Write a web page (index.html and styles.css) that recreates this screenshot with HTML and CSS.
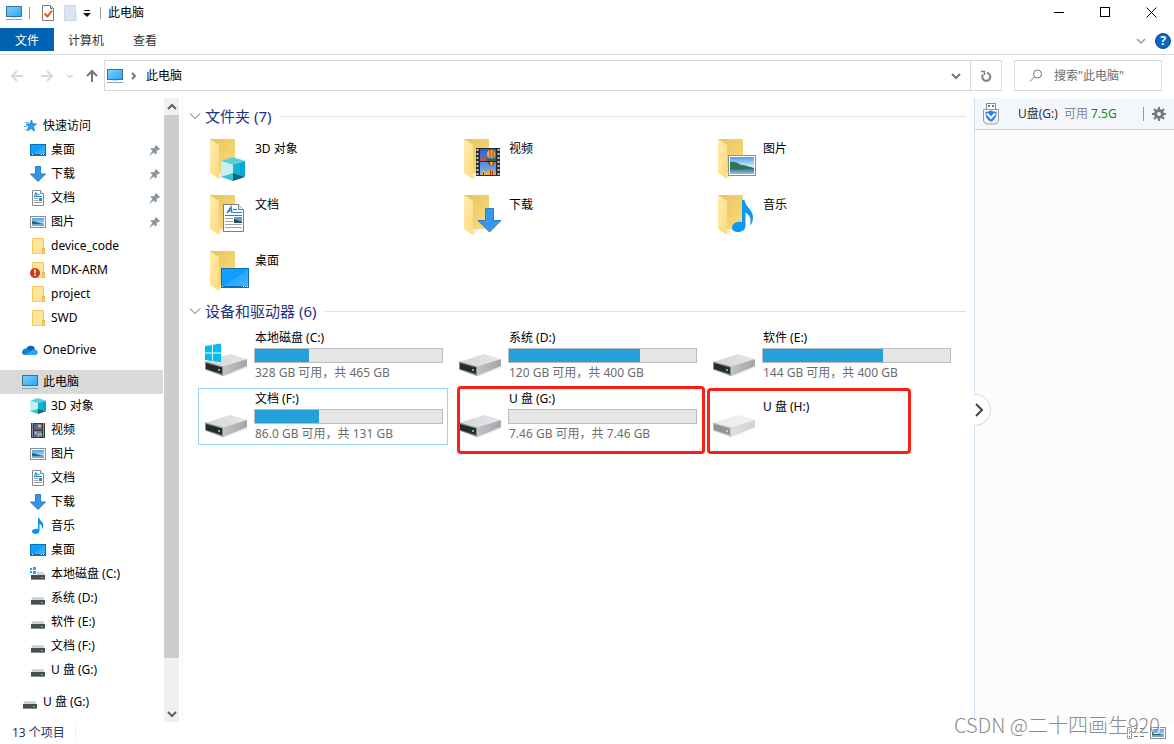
FILE: index.html
```html
<!DOCTYPE html>
<html lang="zh-CN">
<head>
  <meta charset="UTF-8" />
  <meta name="viewport" content="width=device-width, initial-scale=1.0" />
  <title>此电脑</title>
  <link rel="stylesheet" href="styles.css">
</head>
<body>
  <!-- icon sprite -->
  <svg class="sprite" aria-hidden="true">
    <defs>
      <linearGradient id="g-screen" x1="0" y1="0" x2="1" y2="1">
        <stop offset="0" stop-color="#7fd0ff" /><stop offset="1" stop-color="#28a5f5" />
      </linearGradient>
      <linearGradient id="g-desk" x1="0" y1="0" x2="1" y2="1">
        <stop offset="0" stop-color="#1ba1ff" /><stop offset="0.5" stop-color="#0d9dff" /><stop offset="0.51" stop-color="#2aa8ff" /><stop offset="1" stop-color="#45b3ff" />
      </linearGradient>
      <linearGradient id="g-back" x1="0" y1="0" x2="1" y2="1">
        <stop offset="0" stop-color="#e8c35a" /><stop offset="1" stop-color="#fbdc82" />
      </linearGradient>
      <linearGradient id="g-front" x1="0" y1="0" x2="1" y2="1">
        <stop offset="0" stop-color="#ffecb0" /><stop offset="1" stop-color="#fddb7c" />
      </linearGradient>
      <linearGradient id="g-side" x1="0" y1="0" x2="1" y2="0">
        <stop offset="0" stop-color="#c2c3c5" /><stop offset="1" stop-color="#a4a5a8" />
      </linearGradient>
      <linearGradient id="g-top" x1="0" y1="0" x2="1" y2="0">
        <stop offset="0" stop-color="#d4d5d7" /><stop offset="1" stop-color="#e6e7ea" />
      </linearGradient>
      <linearGradient id="g-sky" x1="0" y1="0" x2="0" y2="1">
        <stop offset="0" stop-color="#4f9fee" /><stop offset="1" stop-color="#e4f4fb" />
      </linearGradient>
      <linearGradient id="g-sea" x1="0" y1="0" x2="0" y2="1">
        <stop offset="0" stop-color="#2f6a86" /><stop offset="1" stop-color="#8fc0e0" />
      </linearGradient>
      <linearGradient id="g-film" x1="0" y1="0" x2="0" y2="1">
        <stop offset="0" stop-color="#2b62c4" /><stop offset="1" stop-color="#7db2ee" />
      </linearGradient>
    </defs>

    <symbol id="pc" viewBox="0 0 16 16">
      <rect x="0.5" y="1.5" width="15" height="10" fill="url(#g-screen)" stroke="#3a7396" />
      <rect x="5" y="12" width="6" height="1" fill="#c4dcea" />
      <rect x="0" y="14" width="16" height="1" fill="#8ba0b4" />
    </symbol>
    <symbol id="star" viewBox="0 0 16 16">
      <path d="M9.500 2l1.200 3.800 3.800.2-3 2.500 1 4.500-3.500-2.500L5.500 13l1-4.500L4 6.200l4-.4z" fill="#2b9df0" stroke="#1b7fd0" stroke-width=".8" />
      <path d="M3.500 4.500h3M2 8.500h3M3 11.500h2" stroke="#4fb3f5" fill="none" />
    </symbol>
    <symbol id="desktop" viewBox="0 0 16 16">
      <rect x="0.5" y="2.500" width="15" height="11" fill="url(#g-desk)" stroke="#0b6fb5" />
      <path d="M1 12.500h14" stroke="#0b6fb5" /><path d="M2 12.500h1M11 12.500h1M13 12.500h1" stroke="#fff" />
    </symbol>
    <symbol id="download" viewBox="0 0 16 16">
      <path d="M5.500 .5h5v7.500h5L8 15.500.500 8h5z" fill="#3393e4" stroke="#2a7cc4" />
    </symbol>
    <symbol id="document" viewBox="0 0 16 16">
      <path d="M2.500.500h8l3 3v12h-11z" fill="#fff" stroke="#8a8a8a" />
      <path d="M10.500.500v3h3" fill="#eee" stroke="#8a8a8a" />
      <path d="M4 6.500h8M7.500 4.500h2" stroke="#1b87d6" /><path d="M4.500 6l1.500-3.500L7 6" stroke="#1b87d6" fill="none" />
      <path d="M4 8.500h4M4 10.500h4M4 12.500h8" stroke="#9c9c9c" /><rect x="9" y="8" width="3" height="3" fill="#3c86b4" />
    </symbol>
    <symbol id="picture" viewBox="0 0 16 16">
      <rect x="0.5" y="2.500" width="15" height="11" fill="#fff" stroke="#8d8d8d" />
      <rect x="2" y="4" width="12" height="8" fill="url(#g-sky)" />
      <path d="M2 7c4 .5 7 2 12 3H2z" fill="#2f6a5c" /><path d="M2 10h12v2H2z" fill="#6ea6cc" />
    </symbol>
    <symbol id="music" viewBox="0 0 16 16">
      <path d="M8 0h1.300c.4 3 4.700 4 4 8.500-.2 1.500-1 2.300-1.500 2.500.8-2.500-.3-4.300-2.300-5v7c0 2-2 3-4 3-2.200 0-3.500-1-3.500-2.500C2 11.500 5 10.500 8 11z" fill="#0a94f0" />
    </symbol>
    <symbol id="video" viewBox="0 0 16 16">
      <rect x="1" y="1" width="14" height="15" fill="#3a3a3c" />
      <rect x="4" y="2" width="8" height="6" fill="#3566c0" /><rect x="4" y="9" width="8" height="6" fill="#4d8de0" />
      <path d="M2.500 1.500v14M13.500 1.500v14" stroke="#e4e4e4" stroke-dasharray="1 1" />
      <circle cx="9.500" cy="4" r="1.800" fill="#efb722" /><circle cx="6" cy="6" r="1.200" fill="#d8442c" />
      <path d="M5 10l2 2M8 14l2-2 2 1" stroke="#f0c22a" stroke-width="1.500" /><path d="M4 14h3" stroke="#b32b20" />
    </symbol>
    <symbol id="cube" viewBox="0 0 24 24">
      <path d="M12 0l12 4-12 4L0 4z" fill="#5dcfdc" /><path d="M0 4l12 4v8L0 20z" fill="#c8eff2" />
      <path d="M12 8l12-4v16l-12-4z" fill="#06a6da" /><path d="M12 8l7-2v12l-7-2z" fill="#12b5cf" />
      <path d="M0 20l12-4v8z" fill="#32c5d2" /><path d="M12 16l12 4-12 4z" fill="#04667f" />
    </symbol>
    <symbol id="folder" viewBox="0 0 16 16">
      <path d="M2.500.500h11v9h1v6h-12z" fill="#ffe69a" stroke="#eccb62" /><path d="M12.500 15.500v-5h2v5z" fill="#fbd970" stroke="#e0b94a" />
    </symbol>
    <symbol id="folder-alert" viewBox="0 0 16 16">
      <use href="#folder" width="16" height="16" />
      <circle cx="5" cy="11" r="5" fill="#cb3a20" /><path d="M5 7.500v4M5 12.500v1.500" stroke="#fff" stroke-width="1.500" />
    </symbol>
    <symbol id="onedrive" viewBox="0 0 16 16">
      <path d="M4 7a5 5 0 0 1 8.500-1.500L13 9 5 11z" fill="#0864b8" />
      <path d="M0 10.500C0 8 2 6.500 4 6.500c2 0 3 .8 4.500 2L6 13H3c-2 0-3-1-3-2.500z" fill="#1480d6" />
      <path d="M3.500 13l6-4.500c1-2 5.500-1.500 6 1 .8 1.500 0 3.500-2 3.500z" fill="#2ba5ee" />
    </symbol>
    <symbol id="drive" viewBox="0 0 16 16">
      <path d="M3 7h10l2 3H1z" fill="#d0d2d4" /><rect x="1" y="10" width="14" height="5" fill="#4b4d4f" />
      <path d="M1 14.500h14" stroke="#8b8d8f" /><rect x="11" y="12" width="2" height="1" fill="#3fe04a" />
    </symbol>
    <symbol id="drive-os" viewBox="0 0 16 16">
      <path d="M5 6h8l2 3H5z" fill="#d0d2d4" /><path d="M1 9h14v5H1z" fill="#4b4d4f" /><path d="M1 13.500h14" stroke="#8b8d8f" />
      <rect x="11" y="11" width="2" height="1" fill="#3fe04a" /><path d="M0 1h7v8H0z" fill="#fff" />
      <path d="M0 2h2v2H0zM3 1h3v3H3zM0 5h2v2H0zM3 5h3v3H3z" fill="#00b5f1" />
    </symbol>
    <symbol id="pin" viewBox="0 0 12 12">
      <path d="M7 1l4 4-1 1-1-.2-1.500 1.500.3 2.200-1 1-2-2L1 11.500.5 11 3.500 7l-2-2 1-1 2.300.3L6.300 2.900 6 2z" fill="#8795a1" />
    </symbol>
    <symbol id="chevron" viewBox="0 0 12 12">
      <path d="M1 3.500l5 5 5-5" fill="none" stroke="currentColor" />
    </symbol>
    <symbol id="chevron-bold" viewBox="0 0 12 12">
      <path d="M2 4l4 4 4-4" fill="none" stroke="currentColor" stroke-width="2" />
    </symbol>

    <!-- 48px tiles -->
    <symbol id="big-folder" viewBox="0 0 48 48">
      <path d="M8 4h25v34H8z" fill="url(#g-back)" /><path d="M16 38h8l-7 6z" fill="#ededed" />
      <path d="M8 4l9 6v34l-9-6z" fill="url(#g-front)" />
    </symbol>
    <symbol id="big-3d" viewBox="0 0 48 48">
      <use href="#big-folder" width="48" height="48" /><use href="#cube" x="19" y="22" width="24" height="24" />
    </symbol>
    <symbol id="big-desktop" viewBox="0 0 48 48">
      <use href="#big-folder" width="48" height="48" />
      <rect x="19.500" y="21.500" width="27" height="19" fill="url(#g-desk)" stroke="#0b6fb5" />
      <path d="M20 39.500h26" stroke="#0b6fb5" /><path d="M20 39.500h1M41 39.500h1M43 39.500h1M45 39.500h1" stroke="#fff" />
    </symbol>
    <symbol id="big-document" viewBox="0 0 48 48">
      <use href="#big-folder" width="48" height="48" />
      <path d="M21.500 13.500h15l5 5v22h-20z" fill="#fff" stroke="#7d7d7d" /><path d="M36.500 13.500v5h5" fill="#eee" stroke="#7d7d7d" />
      <path d="M25 22l4-6 1 6M26 20h4" fill="none" stroke="#1b87d6" stroke-width="1.500" />
      <path d="M31 18.500h4M31 21.500h9M23 24.500h17" stroke="#1b87d6" />
      <path d="M23 27.500h8M23 30.500h8M23 33.500h17M23 36.500h17" stroke="#a2a2a2" />
      <rect x="32" y="26" width="8" height="6" fill="#5b9fd4" /><path d="M32 28l8 3v1h-8z" fill="#244f4c" />
    </symbol>
    <symbol id="big-download" viewBox="0 0 48 48">
      <use href="#big-folder" width="48" height="48" />
      <path d="M29.500 17.500h8v12h7.500L33.500 41 22 29.500h7.500z" fill="#3698e8" stroke="#2a7cc4" />
    </symbol>
    <symbol id="big-music" viewBox="0 0 48 48">
      <use href="#big-folder" width="48" height="48" />
      <path d="M32 9h2.500c1 7 9 10 8.500 18-.2 4-1.500 6-3 7.500 1.500-6 .5-10-4.500-13V34c0 5-3.500 7-7.500 7-3.500 0-6-1.500-6-4.500 0-4 5-6.500 10-5.500z" fill="#0a9af5" />
    </symbol>
    <symbol id="big-picture" viewBox="0 0 48 48">
      <use href="#big-folder" width="48" height="48" />
      <rect x="18.500" y="20.500" width="27" height="20" fill="#fff" stroke="#8d8d8d" />
      <rect x="20" y="22" width="24" height="11" fill="url(#g-sky)" /><path d="M20 33h24v6H20z" fill="url(#g-sea)" />
      <path d="M20 27c4-1 8 1 11 3 5 0 9 2 13 3-5 1-18 2-24 1z" fill="#2f7554" />
    </symbol>
    <symbol id="big-video" viewBox="0 0 48 48">
      <use href="#big-folder" width="48" height="48" />
      <rect x="20" y="13" width="24" height="28" fill="#29292b" />
      <path d="M21.500 14v26M42.500 14v26" stroke="#c8c8c8" stroke-width="2" stroke-dasharray="2 2" />
      <path d="M24 14h16v12H24zM24 27h16v13H24z" fill="url(#g-film)" />
      <path d="M24 24l3-3 3 2 3 1 7-1v3H24z" fill="#276b38" /><path d="M24 26c0-4 3-5 6-3v3z" fill="#d84a56" />
      <circle cx="35" cy="19" r="4" fill="#f5b81e" /><path d="M34 15v8M37 16v6" stroke="#bf2626" /><path d="M34 24h2v2h-2z" fill="#7b4a1c" />
      <path d="M31 27h8l-4 5z" fill="#b42b2f" /><path d="M34 27h3l-2 5z" fill="#f4c22b" />
      <path d="M25 40c-1-5 6-6 6 0zM31 40c-1-7 8-7 8 0z" fill="#f0b51f" /><path d="M27.500 37v3M34.500 35v5M36.500 36v4" stroke="#a82424" />
    </symbol>
    <symbol id="big-drive" viewBox="0 0 48 48">
      <path d="M3 34l18 7 24-8v3l-24 9z" fill="#ececec" />
      <path d="M3 30l25-8 17 5-24 8z" fill="url(#g-top)" /><path d="M21 34.500L45 27v7l-24 10z" fill="url(#g-side)" />
      <path d="M3 29.500l18 5V44L3 37.500z" fill="#8a8b8d" /><path d="M4 31l16 4.500v6.500L4 37z" fill="#29292a" />
      <rect x="16" y="37" width="2" height="2" fill="#36e242" />
    </symbol>
    <symbol id="big-drive-os" viewBox="0 0 48 48">
      <use href="#big-drive" width="48" height="48" />
      <path d="M3 14l7-1v7.500H3zM11 12.800l8-1.200v8.900h-8zM3 21.500h7V29l-7-1zM11 21.500h8v8.700l-8-1.100z" fill="#00bcf2" />
    </symbol>
  </svg>

  <div class="window">
    <header class="titlebar">
      <svg class="icon"><use href="#pc" /></svg>
      <span class="divider"></span>
      <button class="quick" aria-label="属性">
        <svg class="icon" viewBox="0 0 16 16"><path d="M2.500.500h8l3 3v12h-11z" fill="#fff" stroke="#7a7a7a" /><path d="M10.500.500v3h3" fill="none" stroke="#7a7a7a" /><path d="M4.500 8.500l3 3 4.500-6" fill="none" stroke="#e8541c" stroke-width="2" /></svg>
      </button>
      <button class="quick" aria-label="新建文件夹">
        <svg class="icon" viewBox="0 0 16 16"><path d="M2.500.500h11v15h-11z" fill="#d9e4f5" stroke="#cbd8ec" /><path d="M12.500 9.500h2v6h-2z" fill="#e6edf8" stroke="#cbd8ec" /></svg>
      </button>
      <button class="quick narrow" aria-label="自定义快速访问工具栏">
        <svg width="8" height="8" viewBox="0 0 8 8"><path d="M1 1.500h6" stroke="#111" /><path d="M0 4h8L4 8z" fill="#111" /></svg>
      </button>
      <span class="divider"></span>
      <h1 class="title">此电脑</h1>
      <div class="controls">
        <button aria-label="最小化"><svg width="11" height="11"><path d="M0 5.500h10" stroke="#000" /></svg></button>
        <button aria-label="最大化"><svg width="11" height="11"><rect x=".5" y=".5" width="9" height="9" fill="none" stroke="#000" /></svg></button>
        <button aria-label="关闭"><svg width="11" height="11"><path d="M.5.500l10 10M10.500.500l-10 10" stroke="#000" /></svg></button>
      </div>
    </header>

    <nav class="ribbon">
      <button class="tab active">文件</button>
      <button class="tab">计算机</button>
      <button class="tab">查看</button>
      <div class="ribbon-end">
        <button aria-label="展开功能区"><svg class="small-icon light" viewBox="0 0 12 12"><path d="M2 4l4 4 4-4" fill="none" stroke="currentColor" stroke-width="1.500" /></svg></button>
        <button class="help" aria-label="帮助">?</button>
      </div>
    </nav>

    <div class="toolbar">
      <div class="history">
        <button aria-label="后退"><svg width="14" height="14" viewBox="0 0 14 14"><path d="M13 7H2M7 2L2 7l5 5" fill="none" stroke="#d8d8d8" stroke-width="2" /></svg></button>
        <button aria-label="前进"><svg width="14" height="14" viewBox="0 0 14 14"><path d="M1 7h11M7 2l5 5-5 5" fill="none" stroke="#d8d8d8" stroke-width="2" /></svg></button>
        <button class="recent" aria-label="最近浏览的位置"><svg width="8" height="8" viewBox="0 0 12 12"><path d="M2 4l4 4 4-4" fill="none" stroke="#d0d0d0" stroke-width="2" /></svg></button>
        <button class="up" aria-label="上移"><svg width="14" height="14" viewBox="0 0 14 14"><path d="M7 13V2M2 7l5-5 5 5" fill="none" stroke="#757575" stroke-width="2" /></svg></button>
      </div>
      <div class="address">
        <svg class="icon"><use href="#pc" /></svg>
        <svg class="crumb-arrow" viewBox="0 0 6 8"><path d="M1 1l3 3-3 3" fill="none" stroke="#777" stroke-width="2" /></svg>
        <a class="crumb" href="#">此电脑</a>
        <button class="drop" aria-label="以前的位置"><svg class="small-icon soft"><use href="#chevron-bold" /></svg></button>
        <button class="refresh" aria-label="刷新"><svg width="12" height="12" viewBox="0 0 12 12"><path d="M3 4.500A4 4 0 1 0 8.500 3.500L7 2.500" fill="none" stroke="#808080" stroke-width="2" /><path d="M1 1.500h3.500V5" fill="none" stroke="#808080" stroke-width="1.500" /></svg></button>
      </div>
      <label class="search">
        <svg width="14" height="14" viewBox="0 0 14 14"><circle cx="8.500" cy="5" r="4" fill="none" stroke="#777" /><path d="M5.500 8L1 12.500" stroke="#777" /></svg>
        <input type="search" placeholder='搜索"此电脑"' aria-label="搜索此电脑">
      </label>
    </div>

    <div class="content">
      <nav class="tree">
        <div class="branch">
          <a class="node root" href="#"><svg class="icon"><use href="#star" /></svg>快速访问</a>
          <a class="node" href="#"><svg class="icon"><use href="#desktop" /></svg>桌面<svg class="pin"><use href="#pin" /></svg></a>
          <a class="node" href="#"><svg class="icon"><use href="#download" /></svg>下载<svg class="pin"><use href="#pin" /></svg></a>
          <a class="node" href="#"><svg class="icon"><use href="#document" /></svg>文档<svg class="pin"><use href="#pin" /></svg></a>
          <a class="node" href="#"><svg class="icon"><use href="#picture" /></svg>图片<svg class="pin"><use href="#pin" /></svg></a>
          <a class="node" href="#"><svg class="icon"><use href="#folder" /></svg>device_code</a>
          <a class="node" href="#"><svg class="icon"><use href="#folder-alert" /></svg>MDK-ARM</a>
          <a class="node" href="#"><svg class="icon"><use href="#folder" /></svg>project</a>
          <a class="node" href="#"><svg class="icon"><use href="#folder" /></svg>SWD</a>
        </div>
        <div class="branch">
          <a class="node root" href="#"><svg class="icon"><use href="#onedrive" /></svg>OneDrive</a>
        </div>
        <div class="branch">
          <a class="node root selected" href="#"><svg class="icon"><use href="#pc" /></svg>此电脑</a>
          <a class="node" href="#"><svg class="icon"><use href="#cube" /></svg>3D 对象</a>
          <a class="node" href="#"><svg class="icon"><use href="#video" /></svg>视频</a>
          <a class="node" href="#"><svg class="icon"><use href="#picture" /></svg>图片</a>
          <a class="node" href="#"><svg class="icon"><use href="#document" /></svg>文档</a>
          <a class="node" href="#"><svg class="icon"><use href="#download" /></svg>下载</a>
          <a class="node" href="#"><svg class="icon"><use href="#music" /></svg>音乐</a>
          <a class="node" href="#"><svg class="icon"><use href="#desktop" /></svg>桌面</a>
          <a class="node" href="#"><svg class="icon"><use href="#drive-os" /></svg>本地磁盘 (C:)</a>
          <a class="node" href="#"><svg class="icon"><use href="#drive" /></svg>系统 (D:)</a>
          <a class="node" href="#"><svg class="icon"><use href="#drive" /></svg>软件 (E:)</a>
          <a class="node" href="#"><svg class="icon"><use href="#drive" /></svg>文档 (F:)</a>
          <a class="node" href="#"><svg class="icon"><use href="#drive" /></svg>U 盘 (G:)</a>
        </div>
        <div class="branch">
          <a class="node root" href="#"><svg class="icon"><use href="#drive" /></svg>U 盘 (G:)</a>
        </div>
      </nav>
      <div class="scrollbar">
        <button aria-label="向上滚动"><svg class="small-icon flip"><use href="#chevron-bold" /></svg></button>
        <div class="track"><div class="thumb"></div></div>
        <button aria-label="向下滚动"><svg class="small-icon"><use href="#chevron-bold" /></svg></button>
      </div>

      <main class="files">
        <section>
          <h2 class="group"><svg class="small-icon"><use href="#chevron" /></svg>文件夹 (7)</h2>
          <div class="folders">
            <a class="tile" href="#"><svg class="big-icon"><use href="#big-3d" /></svg><span class="name">3D 对象</span></a>
            <a class="tile" href="#"><svg class="big-icon"><use href="#big-video" /></svg><span class="name">视频</span></a>
            <a class="tile" href="#"><svg class="big-icon"><use href="#big-picture" /></svg><span class="name">图片</span></a>
            <a class="tile" href="#"><svg class="big-icon"><use href="#big-document" /></svg><span class="name">文档</span></a>
            <a class="tile" href="#"><svg class="big-icon"><use href="#big-download" /></svg><span class="name">下载</span></a>
            <a class="tile" href="#"><svg class="big-icon"><use href="#big-music" /></svg><span class="name">音乐</span></a>
            <a class="tile" href="#"><svg class="big-icon"><use href="#big-desktop" /></svg><span class="name">桌面</span></a>
          </div>
        </section>
        <section>
          <h2 class="group"><svg class="small-icon"><use href="#chevron" /></svg>设备和驱动器 (6)</h2>
          <div class="drives">
            <a class="drive" href="#">
              <svg class="big-icon"><use href="#big-drive-os" /></svg>
              <div class="info">
                <span class="name">本地磁盘 (C:)</span>
                <div class="bar"><div class="used" style="width: 29%"></div></div>
                <span class="space">328 GB 可用，共 465 GB</span>
              </div>
            </a>
            <a class="drive" href="#">
              <svg class="big-icon"><use href="#big-drive" /></svg>
              <div class="info">
                <span class="name">系统 (D:)</span>
                <div class="bar"><div class="used" style="width: 70%"></div></div>
                <span class="space">120 GB 可用，共 400 GB</span>
              </div>
            </a>
            <a class="drive" href="#">
              <svg class="big-icon"><use href="#big-drive" /></svg>
              <div class="info">
                <span class="name">软件 (E:)</span>
                <div class="bar"><div class="used" style="width: 64%"></div></div>
                <span class="space">144 GB 可用，共 400 GB</span>
              </div>
            </a>
            <a class="drive focused" href="#">
              <svg class="big-icon"><use href="#big-drive" /></svg>
              <div class="info">
                <span class="name">文档 (F:)</span>
                <div class="bar"><div class="used" style="width: 34%"></div></div>
                <span class="space">86.0 GB 可用，共 131 GB</span>
              </div>
            </a>
            <a class="drive" href="#">
              <svg class="big-icon"><use href="#big-drive" /></svg>
              <div class="info">
                <span class="name">U 盘 (G:)</span>
                <div class="bar"><div class="used" style="width: 0%"></div></div>
                <span class="space">7.46 GB 可用，共 7.46 GB</span>
              </div>
              <span class="mark mark-g"></span>
            </a>
            <a class="drive empty" href="#">
              <svg class="big-icon"><use href="#big-drive" /></svg>
              <div class="info">
                <span class="name">U 盘 (H:)</span>
              </div>
              <span class="mark mark-h"></span>
            </a>
          </div>
        </section>
      </main>

      <aside class="usb">
        <div class="usb-head">
          <svg class="usb-icon" viewBox="0 0 16 22">
            <path d="M3.500 6V.500h9V6" fill="#fff" stroke="#8a8a8a" /><path d="M5 3h2M9 3h2" stroke="#777" stroke-width="2" />
            <path d="M.5 6.500h15V17c0 2.500-2 4-4 4h-7c-2 0-4-1.500-4-4z" fill="#f4f4f4" stroke="#999" />
            <path d="M8 7.500c2 1 3 1.300 5.500 1.300 0 5-1.500 8-5.500 10-4-2-5.500-5-5.500-10 2.500 0 3.500-.3 5.500-1.300z" fill="#2a7cf0" /><path d="M4 10.500L8 15l4-4.500" fill="none" stroke="#fff" stroke-width="2" />
          </svg>
          <span class="usb-name">U盘(G:)</span>
          <span class="usb-free">可用</span>
          <span class="usb-size">7.5G</span>
          <button class="gear" aria-label="设置">
            <svg width="14" height="14" viewBox="0 0 14 14"><circle cx="7" cy="7" r="3.500" fill="none" stroke="#76797d" stroke-width="3" /><path d="M7 0v3M7 11v3M0 7h3M11 7h3M2 2l2 2M10 10l2 2M12 2l-2 2M4 10l-2 2" stroke="#76797d" stroke-width="2" /></svg>
          </button>
        </div>
        <button class="collapse" aria-label="收起"><svg width="10" height="14" viewBox="0 0 10 14"><path d="M2 1l6 6-6 6" fill="none" stroke="#444" stroke-width="2" /></svg></button>
      </aside>
    </div>

    <footer class="status">
      <span class="count">13 个项目</span>
      <div class="views">
        <button aria-label="详细信息"><svg width="18" height="12" viewBox="0 0 18 12"><path d="M.5.500h4v11h-4z" fill="#fff" stroke="#999" /><path d="M2 2.500h1M2 9.500h1" stroke="#c33" /><path d="M2 6h1" stroke="#36c" /><path d="M7 1.500h4M13 1.500h4M7 5.500h4M13 5.500h4M7 9.500h4M13 9.500h4" stroke="#777" /></svg></button>
        <button aria-label="大缩略图"><svg class="icon"><use href="#picture" /></svg></button>
      </div>
    </footer>
    <span class="watermark">CSDN @二十四画生920</span>
  </div>
</body>
</html>
```
FILE: styles.css
```css
* {
  box-sizing: border-box;
}

body {
  margin: 0;
  background-color: #fff;
  color: #000;
  font-family: "Noto Sans", "Noto Sans CJK SC", sans-serif;
  font-size: 12px;
  line-height: 16px;
}

button {
  display: flex;
  align-items: center;
  justify-content: center;
  padding: 0;
  border: none;
  background: none;
  color: inherit;
  font: inherit;
  cursor: pointer;
}

a {
  color: inherit;
  text-decoration: none;
}

h1,
h2 {
  margin: 0;
  font-weight: normal;
}

svg {
  display: block;
  flex: none;
}

.sprite {
  position: absolute;
  width: 0;
  height: 0;
}

.icon {
  width: 16px;
  height: 16px;
}

.small-icon {
  width: 12px;
  height: 12px;
  color: #606060;
}

.small-icon.soft {
  color: #777;
}

.small-icon.light {
  color: #999;
}

.flip {
  transform: rotate(180deg);
}

.big-icon {
  width: 48px;
  height: 48px;
}

.window {
  position: relative;
  display: flex;
  flex-direction: column;
  min-height: 100vh;
}

/* Title bar */
.titlebar {
  display: flex;
  align-items: center;
  height: 28px;
  padding: 0 0 3px 6px;
}

.divider {
  width: 1px;
  height: 12px;
  margin: 0 7px;
  background-color: #999;
}

.quick {
  width: 22px;
}

.quick.narrow {
  width: 12px;
}

.title {
  font-size: 12px;
}

.controls {
  display: flex;
  margin-left: auto;
}

.controls button {
  width: 46px;
  height: 24px;
}

/* Ribbon tabs */
.ribbon {
  display: flex;
  height: 27px;
  border-bottom: 1px solid #dadbdc;
}

.tab {
  min-width: 54px;
  height: 23px;
  padding: 2px 14px 0;
  color: #333;
}

.tab.active {
  background-color: #0063b1;
  color: #fff;
}

.ribbon-end {
  display: flex;
  align-items: center;
  gap: 8px;
  margin-left: auto;
  padding-right: 3px;
}

.help {
  width: 16px;
  height: 16px;
  border: 1px solid #004e95;
  border-radius: 50%;
  background-color: #0a66c2;
  color: #fff;
  font-weight: bold;
}

/* Address row */
.toolbar {
  display: flex;
  padding: 5px 12px 7px 10px;
}

.history {
  display: flex;
  align-items: center;
  gap: 16px;
  width: 94px;
}

.history .recent {
  width: 16px;
  margin: 0 -9px 0 -8px;
}

.address {
  display: flex;
  flex: 1;
  align-items: center;
  height: 31px;
  padding-left: 2px;
  border: 1px solid #d9d9d9;
}

.crumb-arrow {
  width: 6px;
  height: 8px;
  margin: 0 9px 0 8px;
}

.crumb {
  flex: 1;
}

.drop {
  width: 28px;
  height: 29px;
}

.refresh {
  width: 31px;
  height: 29px;
  border-left: 1px solid #d9d9d9;
}

.search {
  display: flex;
  align-items: center;
  gap: 11px;
  width: 148px;
  height: 31px;
  margin-left: 12px;
  padding-left: 14px;
  border: 1px solid #d9d9d9;
}

.search input {
  min-width: 0;
  flex: 1;
  padding: 0;
  border: none;
  outline: none;
  background: none;
  font: inherit;
}

.search input::placeholder {
  color: #6d6d6d;
  opacity: 1;
}

/* Content */
.content {
  display: flex;
  flex: 1;
}

.tree {
  display: flex;
  flex-direction: column;
  gap: 8px;
  width: 164px;
  padding: 16px 0 8px;
}

.node {
  display: flex;
  align-items: center;
  gap: 5px;
  height: 24px;
  margin-right: 1px;
  padding-left: 30px;
}

.node:hover {
  background-color: #e5f3ff;
}

.node.root {
  padding-left: 22px;
}

.node.selected {
  background-color: #d9d9d9;
}

.pin {
  width: 12px;
  height: 12px;
  margin-left: auto;
  margin-right: 2px;
}

.scrollbar {
  display: flex;
  flex-direction: column;
  width: 15px;
  background-color: #f0f0f0;
}

.scrollbar button {
  width: 15px;
  height: 17px;
}

.track {
  flex: 1;
}

.thumb {
  height: 92%;
  background-color: #cdcdcd;
}

.files {
  flex: 1;
  margin-left: 3px;
  padding: 6px 8px 0 6px;
  border-left: 1px solid #f3f3f3;
}

.group {
  display: flex;
  align-items: center;
  gap: 4px;
  height: 24px;
  margin-bottom: 4px;
  color: #1e3287;
  font-size: 15px;
}

.group::after {
  content: "";
  flex: 1;
  height: 1px;
  margin-left: 4px;
  background-color: #e2e2e2;
}

.folders,
.drives {
  display: grid;
  grid-template-columns: repeat(auto-fill, 250px);
  column-gap: 4px;
  padding-left: 9px;
}

.folders {
  margin-bottom: -1px;
}

.drives {
  row-gap: 4px;
}

.tile {
  display: flex;
  gap: 5px;
  height: 56px;
  padding: 3px 4px;
}

.tile .name {
  padding-top: 6px;
}

.drive {
  position: relative;
  display: flex;
  gap: 4px;
  height: 57px;
  padding-left: 4px;
}

.drive .big-icon {
  margin-top: 5px;
}

.focused {
  outline: 1px solid #99d1ff;
  outline-offset: -1px;
}

.info {
  display: flex;
  flex-direction: column;
  width: 189px;
  padding-top: 3px;
}

.info .name,
.space {
  padding-left: 1px;
}

.bar {
  height: 15px;
  margin: 2px 0;
  border: 1px solid #bcbcbc;
  background-color: #e6e6e6;
}

.used {
  height: 100%;
  background-color: #26a0da;
}

.space {
  color: #6d6d6d;
}

.empty .big-icon {
  opacity: 0.5;
}

.empty .info {
  padding-top: 11px;
}

/* Red frames around the two USB drives */
.mark {
  position: absolute;
  border: 3px solid #fb2017;
  border-radius: 4px;
}

.mark-g {
  inset: -2px -3px -9px 5px;
}

.mark-h {
  inset: 0 45px -9px 1px;
}

/* USB panel */
.usb {
  position: relative;
  width: 200px;
  border-left: 1px solid #d3e3f3;
  background-color: #fcfcfc;
}

.usb-head {
  display: flex;
  align-items: center;
  height: 32px;
  padding: 0 8px;
  border-bottom: 1px solid #c9d3e0;
  background-color: #f3f7fc;
}

.usb-icon {
  width: 16px;
  height: 22px;
}

.usb-name {
  margin-left: 19px;
  color: #333;
}

.usb-free {
  margin: 0 3px 0 6px;
  color: #888;
}

.usb-size {
  color: #108a10;
}

.gear {
  height: 14px;
  margin-left: auto;
  padding-left: 8px;
  border-left: 1px solid #999;
}

.collapse {
  position: absolute;
  top: 50%;
  left: -1px;
  width: 17px;
  height: 32px;
  margin-top: -16px;
  padding-right: 6px;
  border: 1px solid #cfdcec;
  border-left: none;
  border-radius: 0 16px 16px 0;
  background-color: #fff;
}

/* Status bar */
.status {
  display: flex;
  align-items: center;
  justify-content: space-between;
  height: 22px;
  padding: 0 8px 0 12px;
}

.count {
  padding-right: 10px;
  border-right: 1px solid #f0f0f0;
  color: #1e395b;
}

.views {
  display: flex;
  gap: 5px;
}

.watermark {
  position: absolute;
  right: 14px;
  bottom: 6px;
  color: #8c8c8c;
  font-family: "Noto Sans CJK SC", sans-serif;
  font-size: 20px;
  font-weight: 300;
  line-height: 26px;
  text-shadow: 1px 1px 0 #fff;
  pointer-events: none;
}
```
